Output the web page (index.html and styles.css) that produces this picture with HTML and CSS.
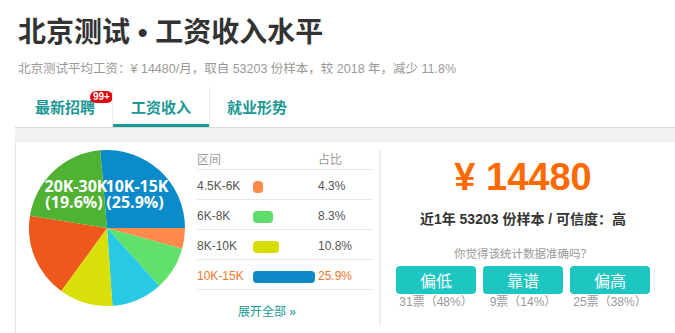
FILE: index.html
```html
<!DOCTYPE html>
<html lang="zh-CN">
<head>
    <meta charset="UTF-8">
    <title>北京测试 • 工资收入水平</title>
    <link rel="stylesheet" href="styles.css">
</head>
<body>
    <!-- 标题 -->
    <div class="header">
        <h1>北京测试 • 工资收入水平</h1>
        <p class="summary">北京测试平均工资：¥ 14480/月，取自 53203 份样本，较 2018 年，减少 11.8%</p>
    </div>

    <!-- 标签页 -->
    <div class="tabs">
        <a class="tab">最新招聘<span class="badge">99+</span></a>
        <a class="tab active">工资收入</a>
        <a class="tab">就业形势</a>
    </div>
    <div class="band"></div>

    <div class="panel">
        <!-- 饼图 -->
        <svg class="pie" width="156" height="156" viewBox="0 0 156 156">
            <path fill="#0b8bc9" d="M78 78 L71.2 0.3 A78 78 0 0 1 156 78 Z"/>
            <path fill="#ff8a4c" d="M78 78 L156 78 A78 78 0 0 1 153.16 98.84 Z"/>
            <path fill="#62e06c" d="M78 78 L153.16 98.84 A78 78 0 0 1 130.19 135.96 Z"/>
            <path fill="#27c9e4" d="M78 78 L130.19 135.96 A78 78 0 0 1 83.44 155.81 Z"/>
            <path fill="#d9df09" d="M78 78 L83.44 155.81 A78 78 0 0 1 32.15 141.1 Z"/>
            <path fill="#ee581c" d="M78 78 L32.15 141.1 A78 78 0 0 1 0.96 65.8 Z"/>
            <path fill="#4fb233" d="M78 78 L0.96 65.8 A78 78 0 0 1 71.2 0.3 Z"/>
            <text class="pie-label" x="47" y="41.5">20K-30K</text>
            <text class="pie-label" x="45" y="57.5">(19.6%)</text>
            <text class="pie-label" x="108" y="41.5">10K-15K</text>
            <text class="pie-label" x="106" y="57.5">(25.9%)</text>
        </svg>

        <!-- 区间表 -->
        <div class="range">
            <div class="row head">
                <span class="name">区间</span>
                <span class="bar-cell"></span>
                <span class="pct">占比</span>
            </div>
            <div class="row">
                <span class="name">4.5K-6K</span>
                <span class="bar-cell"><i class="bar" style="width: 10px; background: #ff8a4c;"></i></span>
                <span class="pct">4.3%</span>
            </div>
            <div class="row">
                <span class="name">6K-8K</span>
                <span class="bar-cell"><i class="bar" style="width: 20px; background: #5fdc6c;"></i></span>
                <span class="pct">8.3%</span>
            </div>
            <div class="row">
                <span class="name">8K-10K</span>
                <span class="bar-cell"><i class="bar" style="width: 26px; background: #d8dd00;"></i></span>
                <span class="pct">10.8%</span>
            </div>
            <div class="row current">
                <span class="name">10K-15K</span>
                <span class="bar-cell"><i class="bar" style="width: 62px; background: #0b89c6;"></i></span>
                <span class="pct">25.9%</span>
            </div>
            <a class="more">展开全部 »</a>
        </div>

        <!-- 平均工资 -->
        <div class="average">
            <div class="money">¥ 14480</div>
            <div class="sample">近1年 53203 份样本 / 可信度：高</div>
            <div class="ask">你觉得该统计数据准确吗？</div>
            <div class="votes">
                <div class="vote">
                    <a class="btn">偏低</a>
                    <span>31票（48%）</span>
                </div>
                <div class="vote">
                    <a class="btn">靠谱</a>
                    <span>9票（14%）</span>
                </div>
                <div class="vote">
                    <a class="btn">偏高</a>
                    <span>25票（38%）</span>
                </div>
            </div>
        </div>
    </div>
</body>
</html>
```

FILE: styles.css
```css
/* 基本样式 */
body {
    margin: 0;
    background: #fff;
    color: #333;
    font-family: "Liberation Sans", "Noto Sans CJK SC", sans-serif;
    font-size: 12px;
}

a {
    cursor: pointer;
}

.header {
    padding: 14px 18px 0;
}

h1 {
    margin: 0;
    font-family: "Liberation Sans", "Noto Sans CJK SC", sans-serif;
    font-size: 28px;
    line-height: 38px;
    font-weight: bold;
    color: #333;
}

.summary {
    margin: 7px 0 0;
    line-height: 20px;
    font-size: 12.5px;
    color: #999;
}

/* 标签页 */
.tabs {
    display: flex;
    margin: 8px 0 0 15px;
    padding-left: 2px;
    border-bottom: 1px solid #d9d9d9;
}

.tab {
    position: relative;
    width: 96px;
    padding-top: 2px;
    line-height: 35px;
    text-align: center;
    font-family: "Noto Sans CJK SC", sans-serif;
    font-size: 15px;
    font-weight: bold;
    color: #1b9894;
    border-bottom: 3px solid transparent;
}

.tab.active {
    border-bottom-color: #1b9894;
    box-shadow: 1px 0 0 #eee, -1px 0 0 #eee;
}

.badge {
    position: absolute;
    left: 73px;
    top: 4px;
    padding: 0 3px;
    height: 12px;
    line-height: 12px;
    border-radius: 7px;
    background: #e5050d;
    color: #fff;
    font-family: "Liberation Sans", sans-serif;
    font-size: 10px;
    font-weight: bold;
}

.band {
    height: 14px;
    margin-left: 15px;
    background: #f2f2f2;
}

/* 内容 */
.panel {
    display: flex;
    align-items: flex-start;
    margin-left: 15px;
    border-left: 1px solid #e6e6e6;
    height: 191px;
}

.pie {
    margin: 8px 0 0 13px;
    flex: none;
}

.pie-label {
    fill: #fff;
    font-family: "Open Sans", sans-serif;
    font-size: 16px;
    font-weight: bold;
    text-anchor: middle;
}

/* 区间表 */
.range {
    width: 176px;
    margin: 5px 0 0 12px;
}

.row {
    display: flex;
    height: 29px;
    padding-top: 4px;
    box-sizing: border-box;
    line-height: 25px;
    border-bottom: 1px solid #e8e8e8;
    color: #555;
    font-size: 12px;
}

.row.head {
    height: 23px;
    padding-top: 0;
    line-height: 23px;
    color: #999;
    font-family: "Noto Sans CJK SC", sans-serif;
}

.row + .row {
    height: 30px;
}

.name {
    width: 56px;
}

.bar-cell {
    width: 65px;
    display: flex;
    align-items: center;
}

.bar {
    display: block;
    height: 12px;
    border-radius: 4px;
}

.row.current {
    color: #f5762c;
}

.more {
    display: block;
    margin-top: 12px;
    padding-left: 41px;
    line-height: 20px;
    color: #1b9894;
}

/* 平均工资 */
.average {
    flex: 1;
    margin: 8px 10px 0 6px;
    height: 175px;
    border-left: 2px solid #eee;
    text-align: center;
}

.money {
    margin-top: 5px;
    line-height: 44px;
    font-size: 38px;
    font-weight: bold;
    color: #ff6a00;
}

.sample {
    margin-top: 9px;
    line-height: 22px;
    font-size: 14px;
    font-weight: bold;
    color: #333;
}

.ask {
    margin-top: 15px;
    line-height: 18px;
    font-size: 11.5px;
    color: #999;
}

.votes {
    display: flex;
    justify-content: center;
    gap: 7px;
    margin-top: 3px;
}

.vote {
    display: flex;
    flex-direction: column;
    width: 80px;
    color: #999;
    line-height: 16px;
}

.btn {
    height: 28px;
    line-height: 28px;
    border-radius: 4px;
    background: #1ec6c2;
    color: #fff;
    font-family: "Noto Sans CJK SC", sans-serif;
    font-size: 16px;
}
```
